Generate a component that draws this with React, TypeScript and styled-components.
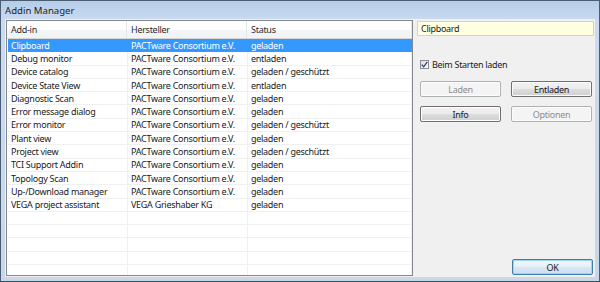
import React from 'react';
import styled, { createGlobalStyle } from 'styled-components';

const GlobalStyle = createGlobalStyle`
  html, body {
    margin: 0;
    padding: 0;
    width: 600px;
    height: 282px;
    overflow: hidden;
    background: #ffffff;
  }
  * {
    box-sizing: border-box;
  }
`;

const FONT = `"Noto Sans", "Open Sans", "Liberation Sans", sans-serif`;

type AddinRow = {
  name: string;
  vendor: string;
  status: string;
};

const rows: AddinRow[] = [
  { name: 'Clipboard', vendor: 'PACTware Consortium e.V.', status: 'geladen' },
  { name: 'Debug monitor', vendor: 'PACTware Consortium e.V.', status: 'entladen' },
  { name: 'Device catalog', vendor: 'PACTware Consortium e.V.', status: 'geladen / geschützt' },
  { name: 'Device State View', vendor: 'PACTware Consortium e.V.', status: 'entladen' },
  { name: 'Diagnostic Scan', vendor: 'PACTware Consortium e.V.', status: 'geladen' },
  { name: 'Error message dialog', vendor: 'PACTware Consortium e.V.', status: 'geladen' },
  { name: 'Error monitor', vendor: 'PACTware Consortium e.V.', status: 'geladen / geschützt' },
  { name: 'Plant view', vendor: 'PACTware Consortium e.V.', status: 'geladen' },
  { name: 'Project view', vendor: 'PACTware Consortium e.V.', status: 'geladen / geschützt' },
  { name: 'TCI Support Addin', vendor: 'PACTware Consortium e.V.', status: 'geladen' },
  { name: 'Topology Scan', vendor: 'PACTware Consortium e.V.', status: 'geladen' },
  { name: 'Up-/Download manager', vendor: 'PACTware Consortium e.V.', status: 'geladen' },
  { name: 'VEGA project assistant', vendor: 'VEGA Grieshaber KG', status: 'geladen' },
];

const EMPTY_ROWS = 5;
const COLS = '120px 120px 1fr';

const Window = styled.div`
  width: 600px;
  height: 282px;
  display: flex;
  flex-direction: column;
  border: 1px solid #4a5d73;
  border-bottom-color: #24566a;
  background: linear-gradient(to bottom, #b5cde9 0px, #cbdbef 20px, #c9d7e6 100%);
  font-family: ${FONT};
`;

const TitleBar = styled.div`
  height: 18px;
  flex: none;
  display: flex;
  align-items: center;
  padding-left: 4px;
  font-size: 9.6px;
  color: #1e1e1e;
`;

const Client = styled.div`
  flex: 1;
  margin: 0 4px 4px 4px;
  display: flex;
  background: #f0f0f0;
  padding: 1px;
  min-height: 0;
`;

const ListBox = styled.div`
  width: 407px;
  flex: none;
  border: 1px solid #828790;
  background: #ffffff;
  overflow: hidden;
  font-size: 9px;
  letter-spacing: -0.28px;
  color: #1a1a1a;
`;

const HeaderRow = styled.div`
  display: grid;
  grid-template-columns: ${COLS};
  height: 18px;
  background: linear-gradient(to bottom, #ffffff 0%, #ffffff 50%, #f4f5f7 51%, #f2f3f5 100%);
  border-bottom: 1px solid #d5d5d5;
`;

const HeaderCell = styled.div`
  display: flex;
  align-items: center;
  padding-left: 4px;
  border-right: 1px solid #e3e6ea;
  color: #2a2a2a;
`;

const Row = styled.div<{ $selected?: boolean }>`
  display: grid;
  grid-template-columns: ${COLS};
  height: 13.3px;
  margin-left: 1px;
  background: ${(p) => (p.$selected ? '#3399ff' : 'transparent')};
  color: ${(p) => (p.$selected ? '#ffffff' : '#1a1a1a')};
  border-bottom: 1px solid ${(p) => (p.$selected ? '#3399ff' : '#f0f0f0')};
`;

const Cell = styled.div<{ $selected?: boolean }>`
  display: flex;
  align-items: center;
  padding-left: 3px;
  white-space: nowrap;
  overflow: hidden;
  line-height: 1;
  border-right: 1px solid ${(p) => (p.$selected ? '#3399ff' : '#f0f0f0')};
`;

const SidePanel = styled.div`
  flex: 1;
  display: flex;
  flex-direction: column;
  margin-left: 4px;
  font-size: 9px;
  letter-spacing: -0.3px;
  color: #1a1a1a;
`;

const InfoBox = styled.div`
  height: 15px;
  margin-top: 1px;
  display: flex;
  align-items: center;
  padding-left: 3px;
  background: #ffffe1;
  border: 1px solid #d2d2c8;
  border-radius: 1px;
  color: #1a1a1a;
`;

const CheckRow = styled.label`
  display: flex;
  align-items: center;
  gap: 3px;
  margin-top: 23px;
  margin-left: 3px;
  height: 10px;
`;

const CheckBox = styled.span`
  width: 9px;
  height: 9px;
  flex: none;
  border: 1px solid #8f8f8f;
  background: linear-gradient(135deg, #dcdcdc 0%, #fbfbfb 100%);
  display: flex;
  align-items: center;
  justify-content: center;
`;

const ButtonGrid = styled.div`
  display: grid;
  grid-template-columns: 81px 81px;
  column-gap: 10px;
  row-gap: 9px;
  margin-top: 12px;
  margin-left: 3px;
`;

const Button = styled.button<{ $default?: boolean }>`
  height: 16px;
  padding: 0;
  font-family: ${FONT};
  font-size: 9px;
  letter-spacing: -0.3px;
  color: #1a1a1a;
  border: 1px solid ${(p) => (p.$default ? '#3c7fb1' : '#707070')};
  border-radius: 2px;
  background: ${(p) =>
    p.$default
      ? 'linear-gradient(to bottom, #f1f7fc 0%, #e6f0f9 50%, #d6e6f4 51%, #cde0f0 100%)'
      : 'linear-gradient(to bottom, #f2f2f2 0%, #ebebeb 50%, #dddddd 51%, #cfcfcf 100%)'};
  box-shadow: inset 0 0 0 1px ${(p) => (p.$default ? '#9fd4f2' : '#fcfcfc')};
  display: flex;
  align-items: center;
  justify-content: center;

  &:disabled {
    border-color: #adb2b5;
    background: #f4f4f4;
    box-shadow: inset 0 0 0 1px #fcfcfc;
    color: #8d8d8d;
  }
`;

const Spacer = styled.div`
  flex: 1;
`;

const Footer = styled.div`
  display: flex;
  justify-content: flex-end;
  padding-right: 1px;
  margin-bottom: 1px;
`;

const OkButton = styled(Button)`
  width: 81px;
`;

export default function App() {
  return (
    <>
      <GlobalStyle />
      <Window>
        <TitleBar>Addin Manager</TitleBar>
        <Client>
          <ListBox>
            <HeaderRow>
              <HeaderCell>Add-in</HeaderCell>
              <HeaderCell>Hersteller</HeaderCell>
              <HeaderCell>Status</HeaderCell>
            </HeaderRow>
            {rows.map((r, i) => {
              const sel = i === 0;
              return (
                <Row key={r.name} $selected={sel}>
                  <Cell $selected={sel}>{r.name}</Cell>
                  <Cell $selected={sel}>{r.vendor}</Cell>
                  <Cell $selected={sel}>{r.status}</Cell>
                </Row>
              );
            })}
            {Array.from({ length: EMPTY_ROWS }).map((_, i) => (
              <Row key={'empty' + i}>
                <Cell />
                <Cell />
                <Cell />
              </Row>
            ))}
          </ListBox>
          <SidePanel>
            <InfoBox>Clipboard</InfoBox>
            <CheckRow>
              <CheckBox>
                <svg width="7" height="7" viewBox="0 0 7 7">
                  <path d="M0.8 3.6 L2.7 5.8 L6.3 0.8" fill="none" stroke="#2b3f8f" strokeWidth="1.3" />
                </svg>
              </CheckBox>
              Beim Starten laden
            </CheckRow>
            <ButtonGrid>
              <Button disabled>Laden</Button>
              <Button>Entladen</Button>
              <Button>Info</Button>
              <Button disabled>Optionen</Button>
            </ButtonGrid>
            <Spacer />
            <Footer>
              <OkButton $default>OK</OkButton>
            </Footer>
          </SidePanel>
        </Client>
      </Window>
    </>
  );
}
